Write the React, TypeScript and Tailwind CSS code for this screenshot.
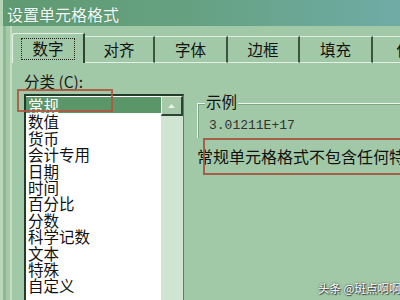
import { } from 'react'

const categories = ['常规', '数值', '货币', '会计专用', '日期', '时间', '百分比', '分数', '科学记数', '文本', '特殊', '自定义']

const tabs = [
  { label: '对齐', w: 'w-[70px]' },
  { label: '字体', w: 'w-[73px]' },
  { label: '边框', w: 'w-[72px]' },
  { label: '填充', w: 'w-[73px]' },
  { label: '保护', w: 'w-[80px]' },
]

export default function App() {
  return (
    <div
      className="relative w-[400px] h-[300px] overflow-hidden bg-[#a2c9a7] text-[#111]"
      style={{ fontFamily: '"Noto Sans CJK SC", "Noto Sans", sans-serif' }}
    >
      {/* Title bar */}
      <div className="flex h-[26px]">
        <div className="w-[3px] bg-[#b3d3b6]" />
        <div className="flex-1 flex items-center pl-[4px] pt-[1px] bg-gradient-to-r from-[#5f9a71] via-[#66a283] to-[#70aba6] text-[16px] leading-none text-[#f4f8f4] [text-shadow:0_0_1px_#4a7a58]">
          设置单元格格式
        </div>
      </div>

      <div className="flex h-[274px]">
        {/* window edge stripes */}
        <div className="flex">
          <div className="w-[3px] bg-[#b8d7bb]" />
          <div className="w-[3px] bg-[#8db994]" />
          <div className="w-[4px] bg-[#a4caa8]" />
          <div className="w-[2px] bg-[#c4dec6]" />
        </div>

        <div className="flex-1 flex flex-col">
          {/* Tabs */}
          <div className="flex items-end h-[37px] pt-[7px]">
            <div className="shrink-0 w-[73px] h-[30px] border-t border-l border-[#e6f1e6] border-r-2 border-r-[#2f4434] rounded-tl-[3px] flex items-center justify-center">
              <div className="px-[10px] h-[22px] flex items-center border border-dotted border-[#222] text-[15.5px] leading-none">
                数字
              </div>
            </div>
            {tabs.map((t) => (
              <div
                key={t.label}
                className={`${t.w} shrink-0 h-[27px] border-t border-[#e0ede0] border-b border-b-[#e6f1e6] border-r-2 border-r-[#3a5540] flex items-center justify-center text-[15.5px] leading-none`}
              >
                {t.label}
              </div>
            ))}
          </div>

          {/* Page */}
          <div className="flex-1 flex">
            {/* Left column */}
            <div className="w-[172px] shrink-0 pl-[12px] flex flex-col">
              <div className="mt-[10px] h-[17px] text-[15.5px] leading-[17px] text-[#1a1a1a]">
                分类 (<span className="underline">C</span>):
              </div>
              <div className="mt-[4px] flex-1 flex border-l-2 border-t-2 border-[#243a2a] border-r border-r-[#5c7f63]">
                <div className="w-[135px] bg-white pt-[1px]">
                  {categories.map((c, i) => (
                    <div
                      key={c}
                      className={
                        'h-[16.4px] pl-[2px] text-[15.5px] leading-[16.4px] whitespace-nowrap ' +
                        (i === 0 ? 'bg-[#5a9668] text-white' : 'text-[#111]')
                      }
                    >
                      {c}
                    </div>
                  ))}
                </div>
                <div className="flex-1 bg-[#cfe4d1] flex flex-col">
                  <div className="h-[20px] bg-[#a6caa9] border-t border-l border-[#e2efe2] border-r-2 border-b-2 border-r-[#2d4432] border-b-[#2d4432] flex items-center justify-center">
                    <svg width="7" height="4" viewBox="0 0 7 4">
                      <path d="M0 4 L3.5 0 L7 4 Z" fill="#e8f2e8" />
                    </svg>
                  </div>
                </div>
              </div>
            </div>

            {/* Right column */}
            <div className="flex-1 min-w-0 pl-[13px] pt-[40px] flex flex-col">
              <div className="relative h-[35px] border-t border-l border-[#eef6ee] shadow-[inset_1px_1px_0_#7fa686]">
                <span className="absolute -top-[11px] left-[7px] px-[1px] bg-[#a2c9a7] text-[15.5px] leading-[17px]">
                  示例
                </span>
                <div
                  className="pl-[11px] pt-[15px] text-[13px] leading-[14px] text-[#333]"
                  style={{ fontFamily: '"Liberation Mono", monospace' }}
                >
                  3.01211E+17
                </div>
              </div>
              <div className="mt-[9px] whitespace-nowrap text-[16px] leading-[18px] text-[#111]">
                常规单元格格式不包含任何特定的数字格式。
              </div>
            </div>
          </div>
        </div>
      </div>

      {/* annotation boxes */}
      <div className="absolute left-[17px] top-[89px] w-[96px] h-[23px] border-2 border-[#b0563f]/90" />
      <div className="absolute left-[203px] top-[138px] w-[210px] h-[37px] border-2 border-[#a9533e]/90" />

      {/* watermark */}
      <div className="absolute left-[318px] top-[280px] text-[11.5px] leading-[16px] text-white [text-shadow:0_0_2px_#333,1px_1px_1px_#333] whitespace-nowrap">
        头条 @斑点啊啊
      </div>
    </div>
  )
}
